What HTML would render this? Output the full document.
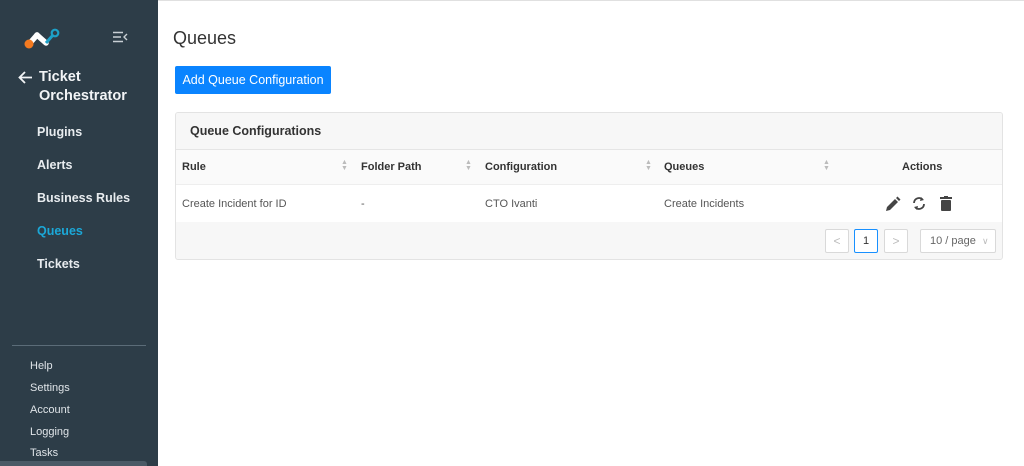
<!DOCTYPE html>
<html><head><style>
*{box-sizing:border-box;margin:0;padding:0}
body{width:1024px;height:466px;overflow:hidden;font-family:"Liberation Sans",sans-serif;background:#fff;position:relative}
.sb{position:absolute;left:0;top:0;width:158px;height:466px;background:#2d3d48;color:#fff}
.abs{position:absolute}
.nav{position:absolute;left:37px;font-size:12.5px;font-weight:bold;color:#e8ecef}
.bot{position:absolute;left:30px;font-size:11px;color:#dfe4e8}
.th{position:absolute;top:161px;font-size:11px;font-weight:bold;color:#333}
.td{position:absolute;top:198px;font-size:11px;color:#555}
.sort{position:absolute;top:160px;font-size:7px;color:#bbb;line-height:6px}
</style></head><body>
<div class="abs" style="left:158px;top:0;width:866px;height:1px;background:#e0e0e0"></div>
<div class="sb">
<svg class="abs" style="left:22px;top:26px" width="42" height="24" viewBox="0 0 42 24">
<line x1="8" y1="17" x2="15" y2="9" stroke="#fff" stroke-width="5.5" stroke-linecap="round"/>
<line x1="15" y1="9" x2="24" y2="17" stroke="#fff" stroke-width="5.5" stroke-linecap="round"/>
<line x1="24" y1="17" x2="31" y2="9" stroke="#1da1c8" stroke-width="3"/>
<circle cx="7" cy="18" r="4.5" fill="#f47a20"/>
<circle cx="33" cy="7" r="3.3" fill="none" stroke="#1da1c8" stroke-width="2.2"/>
</svg>
<svg class="abs" style="left:113px;top:31px" width="15" height="12" viewBox="0 0 15 12"><path d="M0 1.5h10M0 6h8M0 10.5h10M14 3l-3 3 3 3" stroke="#c9d0d5" stroke-width="1.4" fill="none"/></svg>
<svg class="abs" style="left:18px;top:71px" width="15" height="13" viewBox="0 0 15 13"><path d="M14 6.5H2M7 1L1.5 6.5 7 12" stroke="#f2f4f6" stroke-width="1.8" fill="none"/></svg>
<div class="abs" style="left:39px;top:68px;font-size:14.5px;font-weight:bold;line-height:19px;color:#f2f4f6">Ticket<br>Orchestrator</div>
<div class="nav" style="top:125px">Plugins</div>
<div class="nav" style="top:158px">Alerts</div>
<div class="nav" style="top:191px">Business Rules</div>
<div class="nav" style="top:224px;color:#1ba8d8">Queues</div>
<div class="nav" style="top:257px">Tickets</div>
<div class="abs" style="left:12px;top:345px;width:134px;height:1px;background:#5b6c78"></div>
<div class="bot" style="top:360px">Help</div>
<div class="bot" style="top:382px">Settings</div>
<div class="bot" style="top:404px">Account</div>
<div class="bot" style="top:426px">Logging</div>
<div class="bot" style="top:447px">Tasks</div>
<div class="abs" style="left:0;top:461px;width:147px;height:5px;background:#4a5a66;border-radius:0 3px 0 0"></div>
</div>
<div class="abs" style="left:173px;top:28px;font-size:18px;color:#333">Queues</div>
<div class="abs" style="left:175px;top:66px;width:156px;height:28px;background:#0a84ff;border-radius:2px;color:#fff;font-size:12.5px;line-height:28px;text-align:center">Add Queue Configuration</div>
<div class="abs" style="left:175px;top:112px;width:828px;height:148px;border:1px solid #e3e3e3;border-radius:3px;background:#f7f7f7;overflow:hidden">
<div class="abs" style="left:0;top:0;width:828px;height:37px;border-bottom:1px solid #e5e5e5;background:#f7f7f7"></div>
<div class="abs" style="left:14px;top:11px;font-size:12.5px;font-weight:bold;color:#333">Queue Configurations</div>
<div class="abs" style="left:0;top:37px;width:828px;height:35px;background:#fafafa;border-bottom:1px solid #eee"></div>
<div class="abs" style="left:0;top:72px;width:828px;height:37px;background:#fff"></div>
</div>
<div class="th" style="left:182px">Rule</div>
<div class="th" style="left:361px">Folder Path</div>
<div class="th" style="left:485px">Configuration</div>
<div class="th" style="left:664px">Queues</div>
<div class="th" style="left:902px">Actions</div>
<div class="sort" style="left:341px">▲<br>▼</div>
<div class="sort" style="left:465px">▲<br>▼</div>
<div class="sort" style="left:645px">▲<br>▼</div>
<div class="sort" style="left:823px">▲<br>▼</div>
<div class="td" style="left:182px">Create Incident for ID</div>
<div class="td" style="left:361px">-</div>
<div class="td" style="left:485px">CTO Ivanti</div>
<div class="td" style="left:664px">Create Incidents</div>
<svg class="abs" style="left:885px;top:196px" width="16" height="16" viewBox="0 0 16 16"><path d="M1 15l1-4 8-8 3 3-8 8z M11 2l1.5-1.5 3 3L14 5z" fill="#444"/></svg>
<svg class="abs" style="left:911px;top:195px" width="16" height="17" viewBox="0 0 16 17"><path d="M3 8a5 5 0 0 1 8.5-3.5M13 9a5 5 0 0 1-8.5 3.5" stroke="#444" stroke-width="1.8" fill="none"/><path d="M10 2l3 3-4 1z M6 15l-3-3 4-1z" fill="#444"/></svg>
<svg class="abs" style="left:939px;top:196px" width="14" height="15" viewBox="0 0 14 15"><rect x="1" y="1" width="12" height="2" fill="#444"/><rect x="5" y="0" width="4" height="2" fill="#444"/><rect x="2" y="4" width="10" height="11" rx="1" fill="#444"/></svg>
<div class="abs" style="left:825px;top:229px;width:24px;height:24px;border:1px solid #d9d9d9;background:#fff;border-radius:2px;color:#bbb;font-size:12px;text-align:center;line-height:22px">&lt;</div>
<div class="abs" style="left:854px;top:229px;width:24px;height:24px;border:1px solid #1890ff;background:#fff;border-radius:2px;color:#333;font-size:11px;text-align:center;line-height:22px">1</div>
<div class="abs" style="left:884px;top:229px;width:24px;height:24px;border:1px solid #d9d9d9;background:#fff;border-radius:2px;color:#bbb;font-size:12px;text-align:center;line-height:22px">&gt;</div>
<div class="abs" style="left:920px;top:229px;width:76px;height:24px;border:1px solid #d9d9d9;background:#fff;border-radius:2px;color:#666;font-size:11px;line-height:22px;padding-left:9px">10 / page <span style="color:#bbb;font-size:9px;margin-left:3px">∨</span></div>
</body></html>
